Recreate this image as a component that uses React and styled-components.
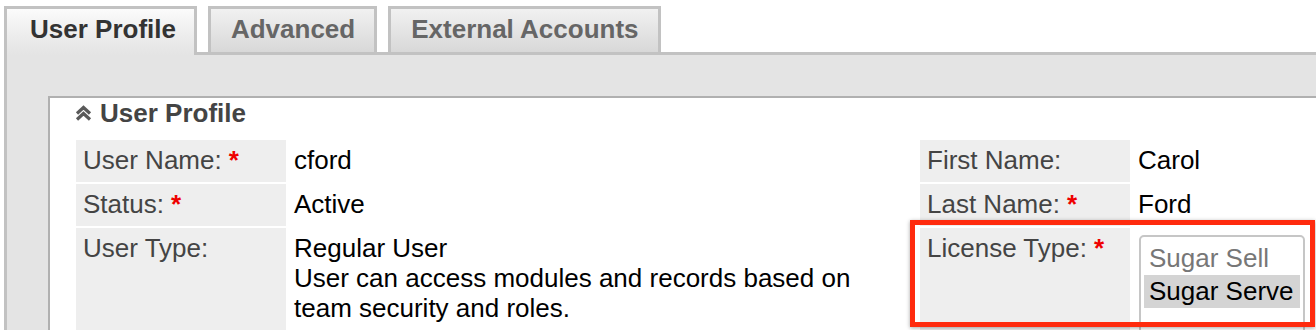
import styled, { createGlobalStyle } from 'styled-components'

const GlobalStyle = createGlobalStyle`
  html, body {
    margin: 0;
    padding: 0;
    background: #ffffff;
    overflow: hidden;
  }
  body {
    font-family: 'Liberation Sans', Arial, Helvetica, sans-serif;
  }
`

const Page = styled.div`
  position: relative;
  width: 1900px;
  padding: 6px 0 0 4px;
  box-sizing: border-box;
  font-family: 'Liberation Sans', Arial, Helvetica, sans-serif;
`

const TabBar = styled.div`
  display: flex;
  align-items: flex-start;
  gap: 11px;
`

const Tab = styled.div`
  position: relative;
  z-index: ${({ active }) => (active ? 1 : 0)};
  box-sizing: border-box;
  height: ${({ active }) => (active ? '49px' : '46px')};
  margin-bottom: ${({ active }) => (active ? '-3px' : '0')};
  padding: ${({ active }) => (active ? '0 18px 0 23px' : '0 19px 0 20px')};
  border: 3px solid #c2c2c2;
  border-bottom: none;
  background: ${({ active }) =>
    active
      ? 'linear-gradient(to bottom, #fbfbfb 0%, #ececec 60%, #e4e4e4 100%)'
      : 'linear-gradient(to bottom, #f1f1f1 0%, #e2e2e2 60%, #d8d8d8 100%)'};
  color: ${({ active }) => (active ? '#333333' : '#666666')};
  font-size: 26px;
  font-weight: 700;
  line-height: 40px;
  white-space: nowrap;
`

const Panel = styled.div`
  border-top: 3px solid #c2c2c2;
  border-left: 3px solid #c2c2c2;
  background: #e4e4e4;
  padding: 41px 0 0 41px;
`

const Section = styled.div`
  border-top: 2px solid #b0b0b0;
  border-left: 2px solid #b0b0b0;
  background: #ffffff;
  padding: 0 0 40px 26px;
`

const SectionHeading = styled.div`
  display: flex;
  align-items: center;
  gap: 8px;
  margin-left: -1px;
  margin-bottom: 12px;
  color: #444444;
  font-size: 26px;
  font-weight: 700;
  line-height: 30px;
`

const FieldGrid = styled.div`
  display: grid;
  grid-template-columns: 210px 634px 210px 634px;
  grid-auto-rows: minmax(42px, auto);
  row-gap: 2px;
`

const Label = styled.div`
  background: #eeeeee;
  padding: 5px 7px;
  color: #444444;
  font-size: 26px;
  line-height: 30px;
  white-space: nowrap;
`

const Required = styled.span`
  color: #ee0000;
  font-weight: 700;
  margin-left: 7px;
`

const Value = styled.div`
  padding: ${({ pad }) => pad || '5px 8px'};
  color: #000000;
  font-size: 26px;
  line-height: 30px;
`

const ListBox = styled.div`
  box-sizing: border-box;
  width: 166px;
  height: 110px;
  border: 2px solid #c6c6c6;
  border-radius: 5px;
  padding: 5px 3px;
  background: #ffffff;
`

const Option = styled.div`
  padding: 0 5px;
  line-height: 33px;
  white-space: nowrap;
  background: ${({ selected }) => (selected ? '#d4d4d4' : 'transparent')};
  color: ${({ selected }) => (selected ? '#000000' : '#777777')};
`

const Highlight = styled.div`
  position: absolute;
  left: 910px;
  top: 220px;
  width: 405px;
  height: 107px;
  box-sizing: border-box;
  border: 5px solid #ff2b0e;
  box-shadow: 0 1px 4px rgba(0, 0, 0, 0.35);
  pointer-events: none;
`

const ChevronIcon = () => (
  <svg width="17" height="16" viewBox="0 0 17 16" aria-hidden="true">
    <polyline points="2,8.5 8.5,2.5 15,8.5" fill="none" stroke="#5a5a5a" strokeWidth="3.2" />
    <polyline points="2,14.5 8.5,8.5 15,14.5" fill="none" stroke="#5a5a5a" strokeWidth="3.2" />
  </svg>
)

const App = () => {
  const tabs = ['User Profile', 'Advanced', 'External Accounts']

  return (
    <>
      <GlobalStyle />
      <Page>
        <TabBar>
          {tabs.map((t, i) => (
            <Tab key={t} active={i === 0}>
              {t}
            </Tab>
          ))}
        </TabBar>
        <Panel>
          <Section>
            <SectionHeading>
              <ChevronIcon />
              User Profile
            </SectionHeading>
            <FieldGrid>
              <Label>
                User Name:<Required>*</Required>
              </Label>
              <Value>cford</Value>
              <Label>First Name:</Label>
              <Value>Carol</Value>

              <Label>
                Status:<Required>*</Required>
              </Label>
              <Value>Active</Value>
              <Label>
                Last Name:<Required>*</Required>
              </Label>
              <Value>Ford</Value>

              <Label>User Type:</Label>
              <Value>
                Regular User
                <br />
                User can access modules and records based on
                <br />
                team security and roles.
              </Value>
              <Label>
                License Type:<Required>*</Required>
              </Label>
              <Value pad="7px 9px">
                <ListBox>
                  <Option>Sugar Sell</Option>
                  <Option selected>Sugar Serve</Option>
                </ListBox>
              </Value>
            </FieldGrid>
          </Section>
        </Panel>
        <Highlight />
      </Page>
    </>
  )
}

export default App
